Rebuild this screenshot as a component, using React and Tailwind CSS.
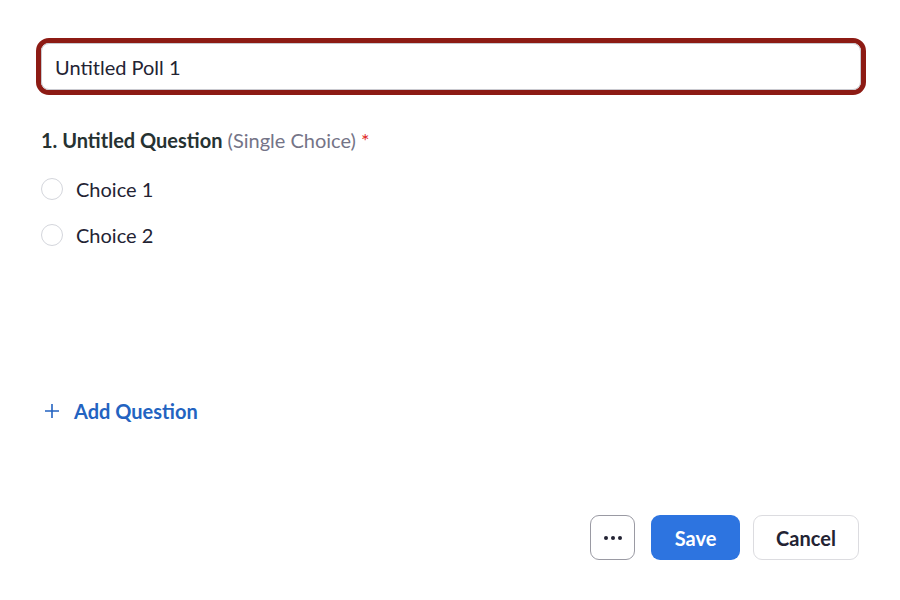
import React from 'react';

const font = { fontFamily: 'Lato, "Noto Sans", sans-serif' };

const Radio = ({ label }) => (
  <label className="flex items-center gap-[13px] h-[22px]">
    <span className="w-[22px] h-[22px] rounded-full border border-[#d4d6dc] bg-white" />
    <span className="text-[20px] leading-[22px] text-[#232333]">{label}</span>
  </label>
);

const App = () => {
  return (
    <div className="w-[900px] h-[600px] bg-white flex flex-col" style={font}>
      {/* Poll title */}
      <div className="mt-[38px] ml-[36px] w-[830px] h-[57px] rounded-[13px] border-[5px] border-[#8d1b14] flex items-center">
        <div className="w-full h-full rounded-[8px] border border-[#c9c9cf] flex items-center pl-[13px]">
          <span className="text-[20px] text-[#232333]">Untitled Poll 1</span>
        </div>
      </div>

      {/* Question */}
      <div className="ml-[41px] mt-[34px] text-[20px] leading-[22px]">
        <span className="font-bold text-[#263232]">1. Untitled Question</span>{' '}
        <span className="text-[#747487]">(Single Choice)</span>{' '}
        <span className="text-[#e02828]">*</span>
      </div>

      <div className="ml-[41px] mt-[27px] flex flex-col gap-[24px]">
        <Radio label="Choice 1" />
        <Radio label="Choice 2" />
      </div>

      {/* Add question */}
      <button className="ml-[44px] mt-[154px] flex items-center gap-[14px] text-[#2363c1] w-fit">
        <svg width="16" height="16" viewBox="0 0 16 16" fill="none" stroke="currentColor" strokeWidth="1.6">
          <path d="M8 1v14M1 8h14" />
        </svg>
        <span className="text-[20px] leading-[22px] font-bold">Add Question</span>
      </button>

      {/* Footer buttons */}
      <div className="mt-auto mb-[40px] mr-[41px] flex justify-end">
        <button className="w-[45px] h-[45px] rounded-[9px] border border-[#9a9aa3] bg-white flex items-center justify-center gap-[3px]">
          <span className="w-[4px] h-[4px] rounded-full bg-[#232333]" />
          <span className="w-[4px] h-[4px] rounded-full bg-[#232333]" />
          <span className="w-[4px] h-[4px] rounded-full bg-[#232333]" />
        </button>
        <button className="ml-[16px] w-[89px] h-[45px] rounded-[9px] bg-[#2d74e0] text-white text-[20px] font-bold">
          Save
        </button>
        <button className="ml-[13px] w-[106px] h-[45px] rounded-[9px] border border-[#dcdce0] bg-white text-[#232333] text-[20px] font-bold">
          Cancel
        </button>
      </div>
    </div>
  );
};

export default App;
